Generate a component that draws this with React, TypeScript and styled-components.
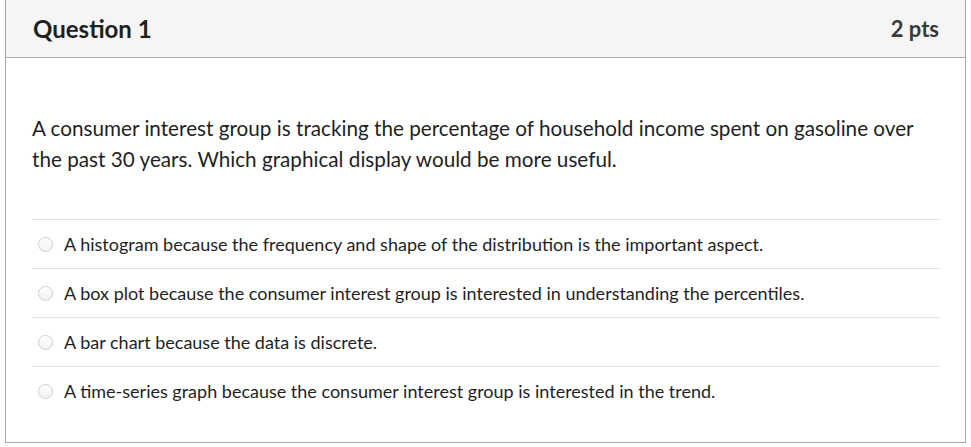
import React from "react";
import styled, { createGlobalStyle } from "styled-components";

const GlobalStyle = createGlobalStyle`
  html, body {
    margin: 0;
    padding: 0;
    background: #ffffff;
  }
  body {
    font-family: Lato, "Open Sans", "Liberation Sans", sans-serif;
    color: #2d3b45;
  }
`;

const answers = [
  "A histogram because the frequency and shape of the distribution is the important aspect.",
  "A box plot because the consumer interest group is interested in understanding the percentiles.",
  "A bar chart because the data is discrete.",
  "A time-series graph because the consumer interest group is interested in the trend.",
];

const App = () => {
  return (
    <>
      <GlobalStyle />
      <Card>
        <Header>
          <Title>Question 1</Title>
          <Points>2 pts</Points>
        </Header>
        <Body>
          <QuestionText>
            A consumer interest group is tracking the percentage of household income spent on
            gasoline over the past 30 years. Which graphical display would be more useful.
          </QuestionText>
          <AnswerList>
            {answers.map((text) => (
              <AnswerRow key={text}>
                <Radio type="radio" name="question_1" />
                <AnswerLabel>{text}</AnswerLabel>
              </AnswerRow>
            ))}
          </AnswerList>
        </Body>
      </Card>
    </>
  );
};

const Card = styled.div`
  margin-left: 5px;
  width: 959px;
  border: 1px solid #ababab;
  border-top: none;
  background: #ffffff;
`;

const Header = styled.div`
  display: flex;
  align-items: center;
  justify-content: space-between;
  height: 57px;
  padding: 0 26px 0 27px;
  background-color: #f5f5f5;
  border-bottom: 1px solid #ababab;
  color: #1f1f1f;
`;

const Title = styled.div`
  font-size: 24px;
  font-weight: 700;
`;

const Points = styled.div`
  font-size: 22px;
  font-weight: 700;
  color: #3a3a3a;
`;

const Body = styled.div`
  padding: 55px 25px 27px 26px;
`;

const QuestionText = styled.p`
  margin: 0 0 44px;
  font-size: 20.7px;
  line-height: 31px;
  color: #1f1f1f;
`;

const AnswerList = styled.div`
  display: flex;
  flex-direction: column;
`;

const AnswerRow = styled.label`
  display: flex;
  align-items: center;
  gap: 11px;
  height: 48px;
  border-top: 1px solid #e2e2e2;
  padding-left: 6px;
`;

const Radio = styled.input`
  appearance: none;
  margin: 0;
  width: 15px;
  height: 15px;
  border: 1px solid #cfcfcf;
  border-radius: 50%;
  background: linear-gradient(#ffffff, #f2f2f2);
  flex-shrink: 0;
`;

const AnswerLabel = styled.span`
  font-size: 18px;
  color: #1f1f1f;
`;

export default App;
